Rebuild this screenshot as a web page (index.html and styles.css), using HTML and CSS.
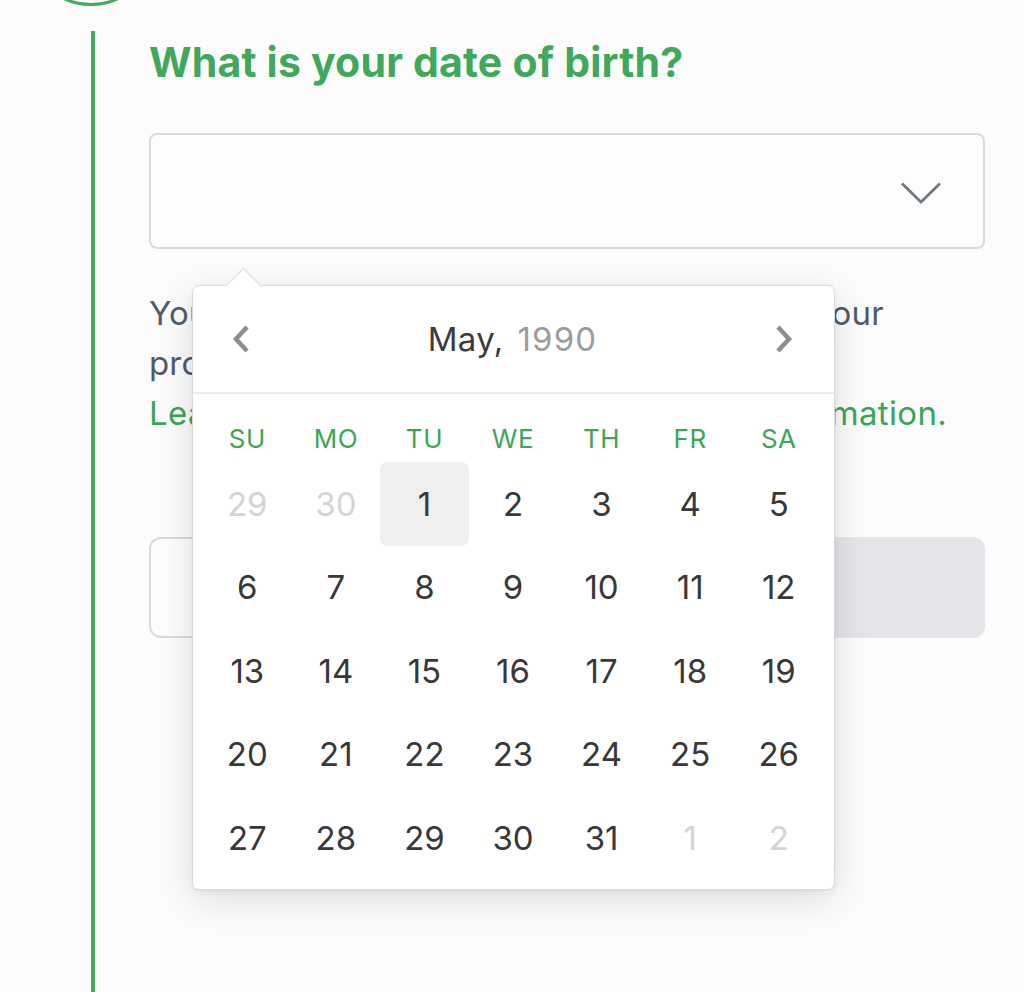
FILE: index.html
```html
<!DOCTYPE html>
<html lang="en">
<head>
    <meta charset="UTF-8">
    <meta name="viewport" content="width=device-width, initial-scale=1.0">
    <title>date of birth</title>
    <link rel="stylesheet" href="styles.css">
</head>
<body>

<div class="step">
    <div class="rail">
        <div class="rail-circle"></div>
        <div class="rail-line"></div>
    </div>

    <div class="step-body">
        <h1 class="question">What is your date of birth?</h1>

        <div class="picker">
            <div class="select">
                <svg class="select-arrow" width="40" height="22" viewBox="0 0 40 22">
                    <polyline points="1,1.5 20,20 39,1.5" fill="none" stroke="#6f7a87" stroke-width="2.8"/>
                </svg>
            </div>

            <div class="popover">
                <div class="cal-head">
                    <svg class="cal-nav" width="20" height="30" viewBox="0 0 20 30">
                        <polyline points="16,3 5,15 16,27" fill="none" stroke="#8e8e8e" stroke-width="4.5"/>
                    </svg>
                    <div class="cal-title">May, <span class="cal-year">1990</span></div>
                    <svg class="cal-nav" width="20" height="30" viewBox="0 0 20 30">
                        <polyline points="4,3 15,15 4,27" fill="none" stroke="#8e8e8e" stroke-width="4.5"/>
                    </svg>
                </div>
                <div class="cal-days">
                    <span>SU</span><span>MO</span><span>TU</span><span>WE</span><span>TH</span><span>FR</span><span>SA</span>
                </div>
                <div class="cal-grid" id="grid"></div>
            </div>
        </div>

        <p class="hint">
            Your birthday helps us display content for your
            profile and age.
            <a href="#" class="hint-link">Learn more about how we handle this information.</a>
        </p>

        <div class="actions">
            <button class="btn btn-back"></button>
            <button class="btn btn-next"></button>
        </div>
    </div>
</div>

<script>
    // may 1990 starts on a tuesday
    var cells = [];
    cells.push({n: 29, muted: true}, {n: 30, muted: true});
    for (let i = 1; i <= 31; i++) {
        cells.push({n: i, muted: false});
    }
    cells.push({n: 1, muted: true}, {n: 2, muted: true});

    var grid = document.getElementById("grid");
    cells.forEach((c, i) => {
        let d = document.createElement("div");
        d.className = "cal-date";
        if (c.muted) d.className += " muted";
        if (!c.muted && c.n == 1) d.className += " picked";
        d.textContent = c.n;
        grid.append(d);
    });
</script>
</body>
</html>
```

FILE: styles.css
```css
*{
    margin: 0;
    padding: 0;
    box-sizing: border-box;
}
body{
    background: #fcfcfc;
    font-family: Inter, "Noto Sans", sans-serif;
    overflow: hidden;
}
.step{
    display: flex;
    min-height: 992px;
}
.rail{
    width: 149px;
    padding-left: 26px;
    display: flex;
    flex-direction: column;
}
.rail-circle{
    width: 130px;
    height: 130px;
    margin-top: -124px;
    border: 3px solid #46a95e;
    border-radius: 50%;
}
.rail-line{
    flex: 1;
    width: 4px;
    margin-top: 25px;
    margin-left: 65px;
    background: #46a95e;
}
.step-body{
    width: 836px;
    padding-top: 38px;
}
.question{
    font-size: 41px;
    line-height: 48px;
    font-weight: 700;
    color: #3fa85a;
    letter-spacing: 0.2px;
}
.picker{
    position: relative;
    margin-top: 47px;
}
.select{
    height: 116px;
    border: 2px solid #d7dae0;
    border-radius: 8px;
    background: #fdfdfd;
    display: flex;
    align-items: center;
    justify-content: flex-end;
    padding-right: 42px;
}
.select-arrow{
    display: block;
    margin-top: 4px;
}
.hint{
    margin-top: 39px;
    font-size: 33px;
    line-height: 50px;
    letter-spacing: 0.15px;
    color: #505b6a;
}
.hint-link{
    display: block;
    letter-spacing: 0.35px;
    color: #3aa655;
    text-decoration: none;
}
.actions{
    margin-top: 99px;
    display: grid;
    grid-template-columns: 1fr 1fr;
    column-gap: 16px;
}
.btn{
    height: 101px;
    border-radius: 12px;
    cursor: pointer;
}
.btn-back{
    background: #fdfdfd;
    border: 2px solid #d7dae0;
}
.btn-next{
    background: #e4e6ea;
    border: none;
}

/* calendar popover */
.popover{
    position: absolute;
    top: 152px;
    left: 43px;
    width: 643px;
    background: #fff;
    border: 1px solid #dadada;
    border-radius: 7px;
    box-shadow: 0 10px 40px rgba(0, 0, 0, 0.12), 0 2px 6px rgba(0, 0, 0, 0.06);
    padding-bottom: 9px;
}
.popover::before{
    content: "";
    position: absolute;
    top: -13px;
    left: 38px;
    width: 24px;
    height: 24px;
    background: #fff;
    border-top: 1px solid #dadada;
    border-left: 1px solid #dadada;
    transform: rotate(45deg);
}
.cal-head{
    position: relative;
    height: 108px;
    border-bottom: 2px solid #ebebeb;
    display: flex;
    align-items: center;
    justify-content: space-between;
    padding: 0 40px 0 38px;
}
.cal-nav{
    display: block;
}
.cal-title{
    font-size: 33px;
    letter-spacing: 0.4px;
    color: #3b3b3b;
}
.cal-year{
    color: #9c9c9c;
    margin-left: 4px;
    letter-spacing: 1.2px;
}
.cal-days{
    display: grid;
    grid-template-columns: repeat(7, 1fr);
    padding: 30px 11px 8px 10px;
    height: 68px;
    line-height: 30px;
    text-align: center;
    font-size: 26px;
    letter-spacing: 0.5px;
    color: #3ca656;
}
.cal-grid{
    display: grid;
    grid-template-columns: repeat(7, 1fr);
    grid-auto-rows: 83.5px;
    padding: 0 11px 0 10px;
}
.cal-date{
    display: flex;
    align-items: center;
    justify-content: center;
    font-size: 33px;
    color: #383838;
    border-radius: 8px;
}
.cal-date.muted{
    color: #d4d4d4;
}
.cal-date.picked{
    background: #efefef;
}
```
